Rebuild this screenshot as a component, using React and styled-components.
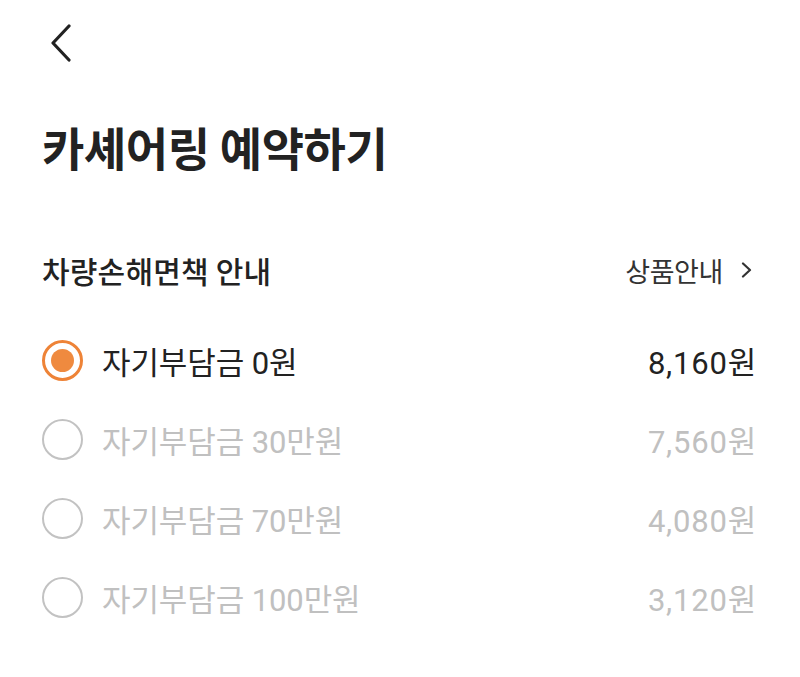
import React, { useState } from "react";
import styled, { createGlobalStyle } from "styled-components";

const GlobalStyle = createGlobalStyle`
  html, body {
    margin: 0;
    padding: 0;
    background: #ffffff;
    font-family: "Noto Sans CJK KR", "Noto Sans", sans-serif;
    color: #222222;
  }
`;

const Page = styled.div`
  width: 800px;
  height: 677px;
  box-sizing: border-box;
  padding: 0 43px 0 42px;
  display: flex;
  flex-direction: column;
  overflow: hidden;
`;

const TopBar = styled.div`
  height: 86px;
  display: flex;
  align-items: center;
  padding-bottom: 2px;
`;

const BackButton = styled.button`
  border: 0;
  background: none;
  padding: 0;
  margin-left: 8px;
  width: 24px;
  height: 40px;
  display: flex;
  align-items: center;
  cursor: pointer;
`;

const Title = styled.h1`
  margin: 26px 0 0 0;
  font-size: 46px;
  font-weight: 700;
  letter-spacing: -0.4px;
  line-height: 64px;
  color: #222222;
`;

const SectionHeader = styled.div`
  margin-top: 70px;
  display: flex;
  justify-content: space-between;
  align-items: center;
  height: 44px;
`;

const SectionTitle = styled.h2`
  margin: 0;
  font-size: 30px;
  font-weight: 500;
  letter-spacing: 0.2px;
  color: #222222;
`;

const InfoLink = styled.a`
  display: flex;
  align-items: center;
  gap: 18px;
  font-size: 27px;
  font-weight: 400;
  letter-spacing: -0.4px;
  color: #333333;
  text-decoration: none;
  cursor: pointer;
  margin-right: 4px;
`;

const OptionList = styled.ul`
  list-style: none;
  margin: 29px 0 0 0;
  padding: 0;
  display: flex;
  flex-direction: column;
`;

const OptionRow = styled.li`
  height: 79px;
  display: flex;
  align-items: center;
  justify-content: space-between;
  color: ${(p) => (p.$active ? "#222222" : "#c0c0c0")};
  cursor: pointer;
`;

const OptionLabel = styled.div`
  display: flex;
  align-items: center;
  gap: 19px;
  font-family: Roboto, "Noto Sans CJK KR", sans-serif;
  font-size: 31px;
  font-weight: 400;
  letter-spacing: -0.1px;
`;

const Radio = styled.span`
  width: 41px;
  height: 41px;
  box-sizing: border-box;
  border-radius: 50%;
  border: ${(p) => (p.$active ? "3px solid #ee8337" : "2.5px solid #c2c2c2")};
  display: flex;
  align-items: center;
  justify-content: center;
  background: #ffffff;

  &::after {
    content: "";
    width: 23px;
    height: 23px;
    border-radius: 50%;
    background: #ef8a3f;
    display: ${(p) => (p.$active ? "block" : "none")};
  }
`;

const Price = styled.span`
  font-family: Roboto, "Noto Sans CJK KR", sans-serif;
  font-size: 31px;
  font-weight: 400;
  letter-spacing: 0.8px;
`;

const options = [
  { label: "자기부담금 0원", price: "8,160원" },
  { label: "자기부담금 30만원", price: "7,560원" },
  { label: "자기부담금 70만원", price: "4,080원" },
  { label: "자기부담금 100만원", price: "3,120원" },
];

function ChevronLeft() {
  return (
    <svg width="22" height="38" viewBox="0 0 22 38" fill="none">
      <path
        d="M19 2 L3 19 L19 36"
        stroke="#222222"
        strokeWidth="3.2"
        strokeLinecap="round"
        strokeLinejoin="round"
      />
    </svg>
  );
}

function ChevronRight() {
  return (
    <svg width="12" height="16" viewBox="0 0 12 16" fill="none">
      <path
        d="M2 1.5 L9 8 L2 14.5"
        stroke="#333333"
        strokeWidth="2.2"
        strokeLinecap="round"
        strokeLinejoin="round"
      />
    </svg>
  );
}

export default function App() {
  const [selected, setSelected] = useState(0);

  return (
    <>
      <GlobalStyle />
      <Page>
        <TopBar>
          <BackButton aria-label="뒤로가기">
            <ChevronLeft />
          </BackButton>
        </TopBar>

        <Title>카셰어링 예약하기</Title>

        <SectionHeader>
          <SectionTitle>차량손해면책 안내</SectionTitle>
          <InfoLink>
            상품안내
            <ChevronRight />
          </InfoLink>
        </SectionHeader>

        <OptionList>
          {options.map((o, i) => (
            <OptionRow
              key={o.label}
              $active={i === selected}
              onClick={() => setSelected(i)}
            >
              <OptionLabel>
                <Radio $active={i === selected} />
                {o.label}
              </OptionLabel>
              <Price>{o.price}</Price>
            </OptionRow>
          ))}
        </OptionList>
      </Page>
    </>
  );
}
